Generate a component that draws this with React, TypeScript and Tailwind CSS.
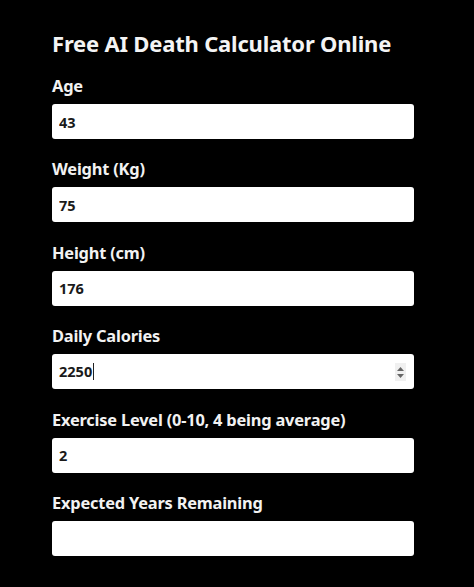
const FONT = { fontFamily: '"Noto Sans", "Liberation Sans", sans-serif' };

const FIELDS = [
  { label: "Age", value: "43" },
  { label: "Weight (Kg)", value: "75" },
  { label: "Height (cm)", value: "176" },
  { label: "Daily Calories", value: "2250", active: true },
  { label: "Exercise Level (0-10, 4 being average)", value: "2" },
  { label: "Expected Years Remaining", value: "" },
];

function Field({ label, value, active }: { label: string; value: string; active?: boolean }) {
  return (
    <div className="flex flex-col">
      <label className="text-[16.4px] leading-[24px] font-bold text-[#f2f2f2] tracking-[-0.2px]">{label}</label>
      {active ? (
        <div className="relative mt-[6px] h-[35px] w-[362px] rounded-[3px] bg-white flex items-center px-[7px]">
          <span className="text-[14.5px] font-bold text-[#1a1a1a]">{value}</span>
          <span className="ml-[1px] h-[17px] w-[1px] bg-[#222]" />
          {/* number spinner */}
          <div className="absolute right-[8px] top-[9px] flex h-[18px] w-[11px] flex-col items-center justify-center gap-[3px] bg-[#f0f0f0]">
            <svg width="7" height="4" viewBox="0 0 7 4"><path d="M3.5 0L7 4H0z" fill="#666" /></svg>
            <svg width="7" height="4" viewBox="0 0 7 4"><path d="M0 0h7L3.5 4z" fill="#666" /></svg>
          </div>
        </div>
      ) : (
        <input
          readOnly
          value={value}
          className="mt-[6px] h-[35px] w-[362px] rounded-[3px] bg-white px-[7px] text-[14.5px] font-bold text-[#1a1a1a] outline-none"
          style={FONT}
        />
      )}
    </div>
  );
}

export default function App() {
  return (
    <div className="min-h-[587px] bg-black pl-[52px] pt-[28px]" style={FONT}>
      <h1 className="text-[22px] leading-[30px] font-bold text-[#f4f4f4] tracking-[-0.2px]">Free AI Death Calculator Online</h1>
      <div className="mt-[16px] flex flex-col gap-[18.4px]">
        {FIELDS.map((f) => (
          <Field key={f.label} {...f} />
        ))}
      </div>
    </div>
  );
}
